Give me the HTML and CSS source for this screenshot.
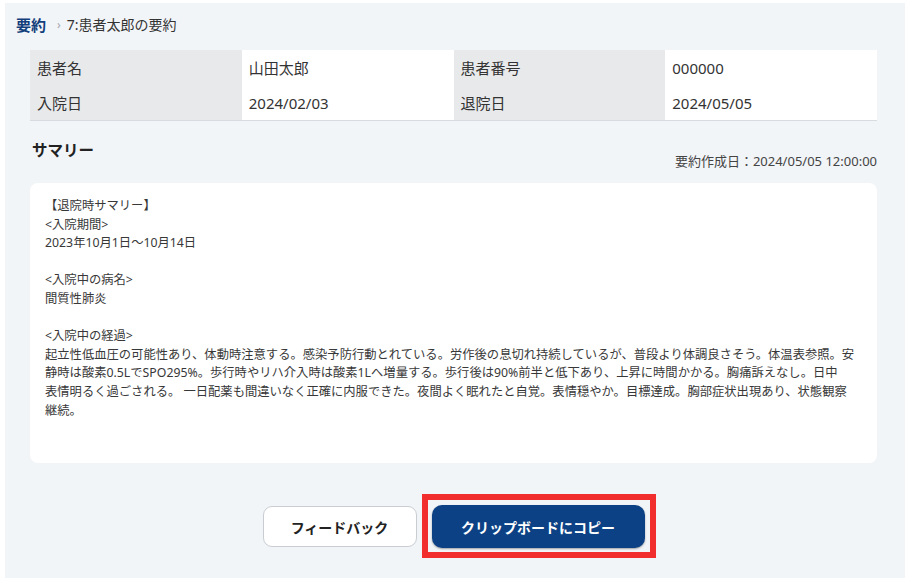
FILE: index.html
```
<html>
    <head>
        <meta charset="utf-8">
        <link rel="stylesheet" href="styles.css">
    </head>
    <body>
        <div class="page">
            <div class="breadcrumb">
                <span class="crumbRoot">要約</span>
                <span class="crumbSep">›</span>
                <span class="crumbCurrent">7:患者太郎の要約</span>
            </div>

            <div class="info">
                <div class="label">患者名</div>
                <div class="value">山田太郎</div>
                <div class="label">患者番号</div>
                <div class="value">000000</div>
                <div class="label">入院日</div>
                <div class="value">2024/02/03</div>
                <div class="label">退院日</div>
                <div class="value">2024/05/05</div>
            </div>

            <div class="summaryHead">
                <span class="summaryTitle">サマリー</span>
                <span class="summaryDate">要約作成日：2024/05/05 12:00:00</span>
            </div>

            <div class="summaryCard">【退院時サマリー】
&lt;入院期間&gt;
2023年10月1日～10月14日

&lt;入院中の病名&gt;
間質性肺炎

&lt;入院中の経過&gt;
起立性低血圧の可能性あり、体動時注意する。感染予防行動とれている。労作後の息切れ持続しているが、普段より体調良さそう。体温表参照。安
静時は酸素0.5LでSPO295%。歩行時やリハ介入時は酸素1Lへ増量する。歩行後は90%前半と低下あり、上昇に時間かかる。胸痛訴えなし。日中
表情明るく過ごされる。 一日配薬も間違いなく正確に内服できた。夜間よく眠れたと自覚。表情穏やか。目標達成。胸部症状出現あり、状態観察
継続。</div>

            <div class="actions">
                <button type="button" class="btn btnFeedback">フィードバック</button>
                <span class="highlight">
                    <button type="button" class="btn btnCopy">クリップボードにコピー</button>
                </span>
            </div>
        </div>
    </body>
</html>
```

FILE: styles.css
```
body{
    margin: 0;
    background: #ffffff;
    font-family: "Noto Sans", "Noto Sans CJK JP", sans-serif;
    color: #333333;
}
.page{
    margin: 3px 0 0 5px;
    height: 575px;
    background: #f2f5f8;
    overflow: hidden;
}
.breadcrumb{
    padding: 12px 0 0 11px;
    height: 20px;
    line-height: 20px;
    display: flex;
    align-items: center;
}
.crumbRoot{
    font-size: 15px;
    font-weight: bold;
    color: #123f7c;
}
.crumbSep{
    font-size: 12px;
    color: #a0a5ab;
    margin: 0 6px 0 11px;
}
.crumbCurrent{
    font-size: 14px;
    color: #333333;
}
.info{
    margin: 15px 0 0 25px;
    width: 847px;
    display: grid;
    grid-template-columns: repeat(4, 1fr);
    grid-auto-rows: 35px;
    border-bottom: 1px solid #d8dbdf;
}
.label, .value{
    display: flex;
    align-items: center;
    padding: 0 7px;
    font-size: 15px;
    color: #333333;
}
.label{
    background: #e8e9eb;
}
.value{
    background: #ffffff;
}
.summaryHead{
    margin-left: 25px;
    width: 847px;
    padding-top: 18px;
    display: flex;
    justify-content: space-between;
    align-items: flex-start;
}
.summaryTitle{
    padding-left: 2px;
    font-size: 15.5px;
    font-weight: bold;
    line-height: 22px;
    color: #222222;
}
.summaryDate{
    margin-top: 13px;
    font-size: 13px;
    line-height: 18px;
    color: #444444;
}
.summaryCard{
    margin: 13px 0 0 25px;
    width: 847px;
    height: 280px;
    box-sizing: border-box;
    padding: 14px 15px;
    background: #ffffff;
    border-radius: 8px;
    white-space: pre-line;
    font-size: 12.3px;
    line-height: 18.6px;
    color: #383838;
}
.actions{
    margin: 42px 0 0 25px;
    width: 847px;
    display: flex;
    justify-content: center;
    align-items: center;
    gap: 15px;
}
.btn{
    font-family: "Noto Sans", "Noto Sans CJK JP", sans-serif;
    font-size: 14px;
    font-weight: bold;
    cursor: pointer;
}
.btnFeedback{
    width: 154px;
    height: 41px;
    background: #ffffff;
    border: 1px solid #c9cdd2;
    border-radius: 9px;
    color: #222222;
}
.btnCopy{
    display: block;
    width: 213px;
    height: 43px;
    background: #0c4285;
    border: none;
    border-radius: 10px;
    color: #ffffff;
    box-shadow: 0 1px 2px rgba(0, 0, 0, 0.35);
}
.highlight{
    position: relative;
    display: block;
}
.highlight::after{
    content: "";
    position: absolute;
    top: -11px;
    left: -10px;
    right: -11px;
    bottom: -10px;
    border: 6px solid #f22d2d;
    pointer-events: none;
}
```
